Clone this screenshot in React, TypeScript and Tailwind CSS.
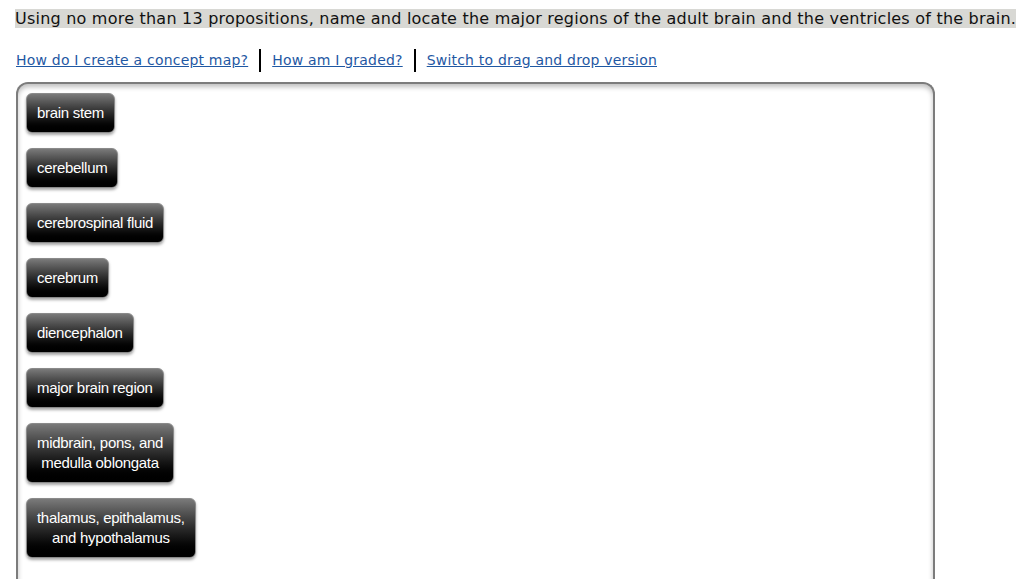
const terms = [
  ["brain stem"],
  ["cerebellum"],
  ["cerebrospinal fluid"],
  ["cerebrum"],
  ["diencephalon"],
  ["major brain region"],
  ["midbrain, pons, and", "medulla oblongata"],
  ["thalamus, epithalamus,", "and hypothalamus"],
];

function Chip({ lines }: { lines: string[] }) {
  return (
    <div className="self-start rounded-[6px] border border-[#8a8a8a] bg-gradient-to-b from-[#7a7a7a] to-[#000000] px-[10px] py-[9px] text-center text-[15px] leading-5 tracking-[-0.3px] text-white shadow-[0_2px_3px_rgba(0,0,0,0.35)] [font-family:'Liberation_Sans',Arial,sans-serif]">
      {lines.map((l) => (
        <div key={l}>{l}</div>
      ))}
    </div>
  );
}

export default function App() {
  return (
    <div className="h-[579px] overflow-hidden bg-white pl-[15px] pt-[9px] [font-family:'DejaVu_Sans',Verdana,sans-serif]">
      {/* 設問文 */}
      <p className="text-[16px] leading-5 tracking-[0.22px] text-[#111]">
        <span className="bg-[#d8d8d4]">
          Using no more than 13 propositions, name and locate the major regions of the adult brain and the ventricles of
          the brain.
        </span>
      </p>

      {/* リンク行 */}
      <div className="mt-[20px] flex items-center gap-[11px] pl-px text-[14px] tracking-[0.2px] text-[#1f58a3]">
        <a href="#" className="underline">
          How do I create a concept map?
        </a>
        <span className="h-[23px] w-[2px] bg-black" />
        <a href="#" className="underline">
          How am I graded?
        </a>
        <span className="h-[23px] w-[2px] bg-black" />
        <a href="#" className="underline">
          Switch to drag and drop version
        </a>
      </div>

      {/* 概念マップ領域 */}
      <div className="ml-px mt-[10px] w-[919px] h-[520px] rounded-t-[12px] border-2 border-b-0 border-[#7c7c7c] bg-white shadow-[inset_0_3px_5px_rgba(0,0,0,0.25)]">
        <div className="flex flex-col gap-[15px] pl-[8px] pt-[9px]">
          {terms.map((t) => (
            <Chip key={t[0]} lines={t} />
          ))}
        </div>
      </div>
    </div>
  );
}
